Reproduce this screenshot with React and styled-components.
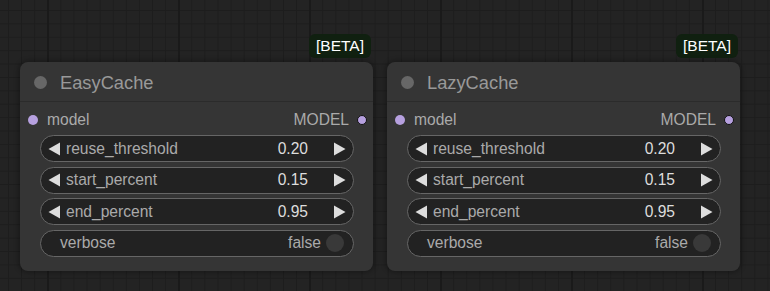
import styled, { createGlobalStyle } from "styled-components";

const GlobalStyle = createGlobalStyle`
    html, body {
        margin: 0;
        padding: 0;
        background: #222222;
        font-family: "Liberation Sans", Arial, sans-serif;
    }
`;

const nodes = [
    { title: "EasyCache" },
    { title: "LazyCache" },
];

const numberWidgets = [
    { name: "reuse_threshold", value: "0.20" },
    { name: "start_percent", value: "0.15" },
    { name: "end_percent", value: "0.95" },
];

const Arrow = ({ dir }) => (
    <svg width="13" height="14" viewBox="0 0 13 14">
        {dir === "left"
            ? <polygon points="12,0.5 12,13.5 0.5,7" fill="#dddddd" />
            : <polygon points="1,0.5 1,13.5 12.5,7" fill="#dddddd" />}
    </svg>
);

const GraphNode = ({ title }) => (
    <NodeWrap>
        <Badge>[BETA]</Badge>
        <Node>
            <Title>
                <TitleDot />
                {title}
            </Title>
            <SlotRow>
                <Slot>
                    <SlotDot />
                    model
                </Slot>
                <Slot $output>
                    MODEL
                    <SlotDot $output />
                </Slot>
            </SlotRow>
            <Widgets>
                {numberWidgets.map((w) => (
                    <Widget key={w.name}>
                        <Arrow dir="left" />
                        <Label>{w.name}</Label>
                        <Value>{w.value}</Value>
                        <Arrow dir="right" />
                    </Widget>
                ))}
                <Widget $toggle>
                    <Label>verbose</Label>
                    <ToggleValue>false</ToggleValue>
                    <Knob />
                </Widget>
            </Widgets>
        </Node>
    </NodeWrap>
);

const App = () => (
    <>
        <GlobalStyle />
        <Canvas>
            {nodes.map((n) => <GraphNode key={n.title} title={n.title} />)}
        </Canvas>
    </>
);

export default App;

const Canvas = styled.div`
    width: 770px;
    height: 291px;
    box-sizing: border-box;
    padding: 34px 0 0 20px;
    display: flex;
    gap: 14px;
    align-items: flex-start;
    background-color: #232323;
    background-image:
        linear-gradient(to right, #1a1a1a 0 2px, transparent 2px),
        linear-gradient(to right, #1d1d1d 0 1px, transparent 1px),
        linear-gradient(to bottom, #1d1d1d 0 1px, transparent 1px);
    background-size: 131px 100%, 13.1px 100%, 100% 13.4px;
    background-position: 47px 0, 8px 0, 0 10px;
    overflow: hidden;
`;

const NodeWrap = styled.div`
    display: flex;
    flex-direction: column;
    align-items: flex-end;
`;

const Badge = styled.div`
    height: 24px;
    padding: 0 7px;
    margin: 0 2px 4px 0;
    display: flex;
    align-items: center;
    border-radius: 6px;
    background: #102010;
    color: #ffffff;
    font-size: 15.5px;
`;

const Node = styled.div`
    width: 353px;
    height: 209px;
    box-sizing: border-box;
    border-radius: 8px;
    background: #353535;
    box-shadow: 0 0 4px 2px rgba(0, 0, 0, 0.25);
`;

const Title = styled.div`
    height: 40px;
    box-sizing: border-box;
    border-bottom: 1px solid #2b2b2b;
    display: flex;
    align-items: center;
    gap: 13px;
    padding: 2px 0 0 14px;
    color: #999999;
    font-size: 18.3px;
`;

const TitleDot = styled.span`
    width: 13px;
    height: 13px;
    margin-top: -1px;
    border-radius: 50%;
    background: #676767;
`;

const SlotRow = styled.div`
    height: 33px;
    box-sizing: border-box;
    display: flex;
    align-items: center;
    justify-content: space-between;
    padding: 3px 6px 0 8px;
    color: #aaaaaa;
    font-size: 15.6px;
`;

const Slot = styled.div`
    display: flex;
    align-items: center;
    gap: ${(p) => (p.$output ? "8px" : "9px")};
`;

const SlotDot = styled.span`
    width: 10px;
    height: 10px;
    box-sizing: border-box;
    border-radius: 50%;
    background: #b6a0df;
    border: ${(p) => (p.$output ? "1px solid #111" : "none")};
`;

const Widgets = styled.div`
    display: flex;
    flex-direction: column;
    gap: 4.5px;
    padding: 0 19px 0 20px;
`;

const Widget = styled.div`
    height: 27px;
    box-sizing: border-box;
    border: 1px solid #666666;
    border-radius: 14px;
    background: #222222;
    display: flex;
    align-items: center;
    padding: ${(p) => (p.$toggle ? "0 9px 0 19px" : "0 7px")};
    gap: 5px;
    font-size: 15.6px;
`;

const Label = styled.span`
    color: #aaaaaa;
    flex: 1;
`;

const Value = styled.span`
    color: #dddddd;
    margin-right: 20px;
`;

const ToggleValue = styled.span`
    color: #aaaaaa;
`;

const Knob = styled.span`
    width: 18px;
    height: 18px;
    border-radius: 50%;
    background: #393939;
`;
